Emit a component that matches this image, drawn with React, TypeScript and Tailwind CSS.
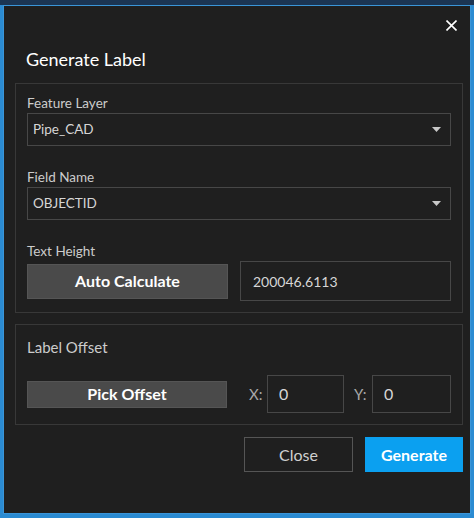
import React from "react";

const font = { fontFamily: 'Lato, "Noto Sans", sans-serif' };

function Caret() {
  return (
    <svg width="9" height="5" viewBox="0 0 9 5" className="shrink-0">
      <path d="M0 0 L9 0 L4.5 5 Z" fill="#c8c8c8" />
    </svg>
  );
}

function Select({ value }: { value: string }) {
  return (
    <div className="flex h-[33px] items-center justify-between border border-[#474747] bg-[#1f1f1f] pl-[5px] pr-[9px] text-[13.5px] text-[#d6d6d6]">
      <span>{value}</span>
      <Caret />
    </div>
  );
}

export default function App() {
  return (
    <div
      className="flex h-[518px] w-[474px] flex-col bg-[#2b8bd2]"
      style={font}
    >
      <div className="h-[5px] w-full shrink-0 bg-[#1b3553]" />
      <div className="mx-[3px] flex h-[509px] flex-col border border-[#3a95d8] bg-[#1f1f1f] pl-[11px] pr-[7px]">
        <div className="flex h-[25px] items-end justify-end pr-[6px]">
          <svg width="11" height="11" viewBox="0 0 11 11">
            <path
              d="M0.5 0.5 L10.5 10.5 M10.5 0.5 L0.5 10.5"
              stroke="#ffffff"
              strokeWidth="1.6"
            />
          </svg>
        </div>
        <div className="mt-[16px] pl-[11px] text-[18px] leading-[24px] text-white">
          Generate Label
        </div>
        <div className="mt-[12px] flex flex-col border border-[#383838] px-[11px] pb-[11px] pt-[10px]">
          <div className="text-[13.5px] leading-[19px] text-[#cccccc]">
            Feature Layer
          </div>
          <Select value="Pipe_CAD" />
          <div className="mt-[22px] text-[13.5px] leading-[19px] text-[#cccccc]">
            Field Name
          </div>
          <Select value="OBJECTID" />
          <div className="mt-[22px] text-[13.5px] leading-[19px] text-[#cccccc]">
            Text Height
          </div>
          <div className="flex h-[40px] items-center gap-[12px]">
            <button className="flex h-[35px] w-[201px] items-center justify-center border border-[#555555] bg-[#4a4a4a] text-[16px] font-bold text-white">
              Auto Calculate
            </button>
            <div className="flex h-[40px] flex-1 items-center border border-[#474747] pl-[12px] text-[14px] text-[#d6d6d6]">
              200046.6113
            </div>
          </div>
        </div>
        <div className="mt-[11px] flex flex-col border border-[#383838] px-[11px] pb-[11px] pt-[12px]">
          <div className="text-[15px] leading-[20px] text-[#cccccc]">
            Label Offset
          </div>
          <div className="mt-[18px] flex h-[38px] items-center">
            <button className="flex h-[27px] w-[200px] items-center justify-center border border-[#555555] bg-[#4a4a4a] text-[16px] font-bold text-white">
              Pick Offset
            </button>
            <span className="ml-[22px] w-[18px] text-[15px] text-[#a8a8a8]">
              X:
            </span>
            <div className="flex h-[38px] w-[77px] items-center border border-[#474747] pl-[11px] text-[16px] text-[#d6d6d6]">
              0
            </div>
            <span className="ml-[10px] w-[18px] text-[15px] text-[#a8a8a8]">
              Y:
            </span>
            <div className="flex h-[38px] flex-1 items-center border border-[#474747] pl-[11px] text-[16px] text-[#d6d6d6]">
              0
            </div>
          </div>
        </div>
        <div className="mt-[12px] flex justify-end gap-[12px]">
          <button className="flex h-[35px] w-[109px] items-center justify-center border border-[#555555] bg-[#1f1f1f] text-[16px] text-[#d0d0d0]">
            Close
          </button>
          <button className="flex h-[35px] w-[98px] items-center justify-center bg-[#0ba0f0] text-[16px] font-bold text-white">
            Generate
          </button>
        </div>
      </div>
    </div>
  );
}
